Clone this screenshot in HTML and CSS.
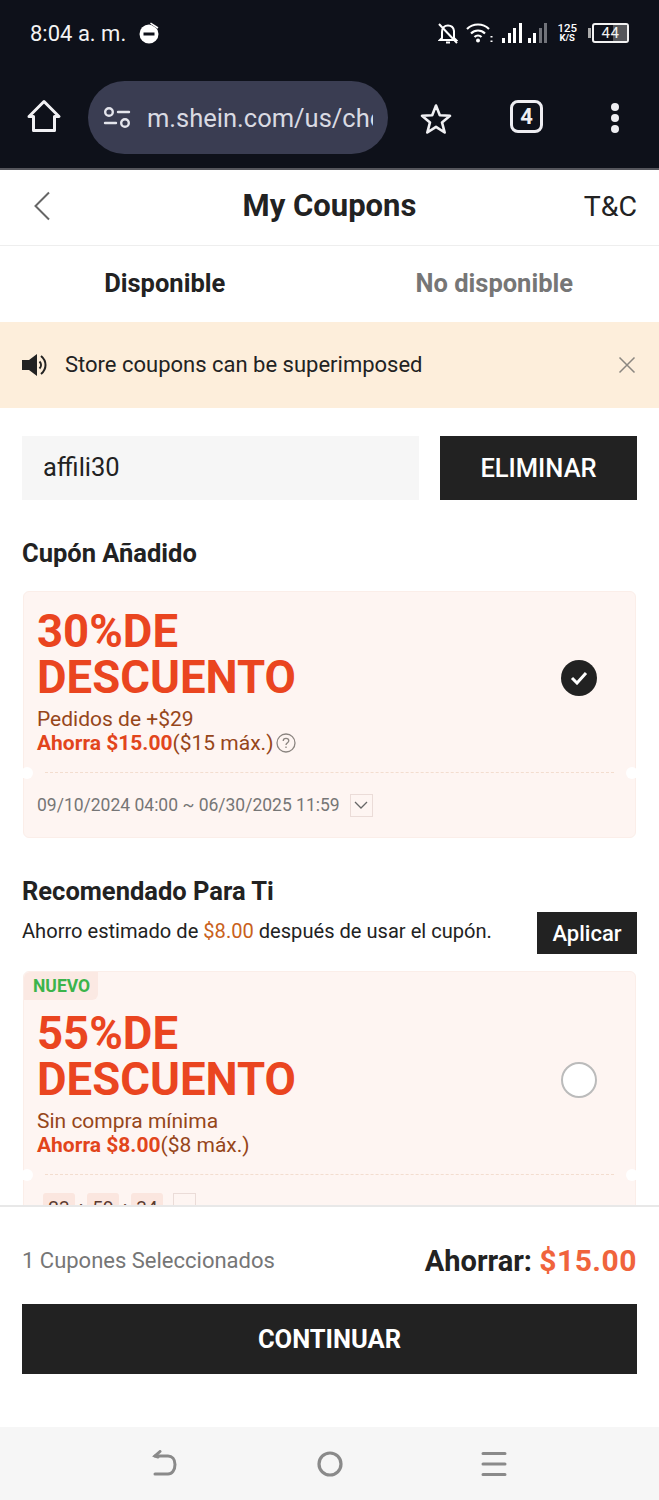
FILE: index.html
```html
<!DOCTYPE html>
<html lang="es">
  <head>
    <meta charset="UTF-8" />
    <meta name="viewport" content="width=device-width, initial-scale=1.0" />
    <title>My Coupons</title>
    <link rel="stylesheet" href="styles.css">
  </head>
  <body>
    <div class="phone">
      <div class="system-top">
        <div class="status-bar">
          <div class="status-left">
            <span class="clock">8:04 a. m.</span>
            <svg class="dnd" width="22" height="22" viewBox="0 0 22 22">
              <circle cx="11" cy="12" r="9.5" fill="#fff" />
              <path d="M11 1.5 20.5 7.5 22 0H11Z" fill="#0e111a" />
              <path d="M12.5 1.2 20 6" stroke="#fff" stroke-width="1.5" fill="none" />
              <rect x="5.5" y="10.5" width="11" height="3" fill="#0e111a" />
            </svg>
          </div>
          <div class="status-right">
            <svg width="20" height="24" viewBox="0 0 20 24" fill="none" stroke="#fff" stroke-width="2">
              <path d="M4 17V11C4 7 6.500 4.500 10 4.500 13 4.500 15.500 6.500 16 10V17L18 19H2Z" />
              <path d="M8 21.500H12" />
              <path d="M1 3 19 22" />
            </svg>
            <svg class="wifi" width="27" height="22" viewBox="0 0 27 22" fill="none" stroke="#fff" stroke-width="2.200">
              <path d="M1 7C7 1 17 1 23 7" />
              <path d="M5 11.500C9 7.500 15 7.500 19 11.500" />
              <path d="M8.500 15C10.500 13 13.500 13 15.500 15" />
              <circle cx="12" cy="18.500" r="2" fill="#fff" stroke="none" />
              <path d="M25.500 14V15.500M25.500 18.500V20" stroke-width="2" />
            </svg>
            <div class="signal">
              <i class="bar-1"></i><i class="bar-2"></i><i class="bar-3"></i><i class="bar-4"></i>
            </div>
            <div class="signal">
              <i class="bar-1"></i><i class="bar-2"></i><i class="bar-3 dim"></i><i class="bar-4 dim"></i>
            </div>
            <div class="speed"><span>125</span><span class="speed-unit">K/S</span></div>
            <div class="battery">
              <span class="battery-cap"></span>
              <div class="battery-body"><span class="battery-fill"></span><span class="battery-level">44</span></div>
            </div>
          </div>
        </div>

        <div class="browser-bar">
          <svg class="home-icon" width="36" height="36" viewBox="0 0 36 36" fill="none" stroke="#f1f1f4" stroke-width="3" stroke-linejoin="round">
            <path d="M3 18.500 18 3.500 33 18.500H28.500V32.500H7.500V18.500Z" />
          </svg>
          <div class="url-pill">
            <svg width="28" height="22" viewBox="0 0 28 22" fill="none" stroke="#e4e5ec" stroke-width="2.400" stroke-linecap="round">
              <circle cx="6" cy="5" r="3.800" />
              <path d="M15 5H26" />
              <path d="M2 16H13" />
              <circle cx="22" cy="16" r="3.800" />
            </svg>
            <span class="url-text">m.shein.com/us/checkout</span>
          </div>
          <svg class="star-icon" width="34" height="34" viewBox="0 0 34 34" fill="none" stroke="#f1f1f4" stroke-width="2.600" stroke-linejoin="round">
            <path d="M17 3.500 20.800 13.200 31 13.800 23 20.400 25.700 30.500 17 24.800 8.300 30.500 11 20.400 3 13.800 13.200 13.200Z" />
          </svg>
          <div class="tab-count">4</div>
          <div class="kebab"><i></i><i></i><i></i></div>
        </div>
      </div>

      <div class="page">
        <header class="page-header">
          <svg class="back-icon" width="20" height="30" viewBox="0 0 20 30" fill="none" stroke="#666" stroke-width="2">
            <path d="M17 1.500 3.500 15 17 28.500" />
          </svg>
          <h1>My Coupons</h1>
          <span class="tc-link">T&amp;C</span>
        </header>

        <nav class="tabs">
          <div class="tab active">Disponible</div>
          <div class="tab">No disponible</div>
        </nav>

        <div class="notice">
          <svg width="26" height="24" viewBox="0 0 26 24">
            <path d="M0 7H7L15 1V23L7 17H0Z" fill="#222" />
            <path d="M17.500 8.500C19.500 10.500 19.500 13.500 17.500 15.500" fill="none" stroke="#222" stroke-width="2" />
            <path d="M19 3C25 8 25 16 19 21" fill="none" stroke="#222" stroke-width="2" />
          </svg>
          <span class="notice-text">Store coupons can be superimposed</span>
          <svg class="notice-close" width="18" height="18" viewBox="0 0 18 18" fill="none" stroke="#8b8780" stroke-width="1.500">
            <path d="M1.500 1.500 16.500 16.500M16.500 1.500 1.500 16.500" />
          </svg>
        </div>

        <div class="content">
          <div class="code-row">
            <div class="code-input">affili30</div>
            <button class="remove-btn" type="button">ELIMINAR</button>
          </div>

          <h2 class="section-title added-title">Cupón Añadido</h2>

          <div class="coupon">
            <div class="coupon-main">
              <div class="coupon-info">
                <div class="coupon-amount">30%DE<br />DESCUENTO</div>
                <div class="coupon-rule">Pedidos de +$29</div>
                <div class="coupon-rule"><b>Ahorra $15.00</b>($15 máx.)<svg class="help-icon" width="20" height="20" viewBox="0 0 20 20" fill="none" stroke="#8b8580" stroke-width="1.300">
                    <circle cx="10" cy="10" r="9" />
                    <path d="M7.200 8C7.200 6.300 8.500 5.300 10 5.300 11.700 5.300 12.800 6.400 12.800 7.800 12.800 9.700 10 9.800 10 12" />
                    <path d="M10 13.600V15" />
                  </svg></div>
              </div>
              <span class="radio checked">
                <svg width="18" height="14" viewBox="0 0 18 14" fill="none" stroke="#fff" stroke-width="3">
                  <path d="M2 7 7 12 16 2" />
                </svg>
              </span>
            </div>
            <div class="coupon-divider"></div>
            <div class="coupon-foot">
              <span class="coupon-date">09/10/2024 04:00 ~ 06/30/2025 11:59</span>
              <span class="expand-box">
                <svg width="14" height="8" viewBox="0 0 14 8" fill="none" stroke="#666" stroke-width="1.300">
                  <path d="M1 1 7 7 13 1" />
                </svg>
              </span>
            </div>
          </div>

          <h2 class="section-title rec-title">Recomendado Para Ti</h2>
          <div class="saving-row">
            <span class="saving-text">Ahorro estimado de <em>$8.00</em> después de usar el cupón.</span>
            <button class="apply-btn" type="button">Aplicar</button>
          </div>

          <div class="coupon coupon-new">
            <span class="new-badge">NUEVO</span>
            <div class="coupon-main">
              <div class="coupon-info">
                <div class="coupon-amount">55%DE<br />DESCUENTO</div>
                <div class="coupon-rule">Sin compra mínima</div>
                <div class="coupon-rule"><b>Ahorra $8.00</b>($8 máx.)</div>
              </div>
              <span class="radio"></span>
            </div>
            <div class="coupon-divider"></div>
            <div class="coupon-foot countdown">
              <span class="time-box">23</span><span class="time-sep">:</span>
              <span class="time-box">59</span><span class="time-sep">:</span>
              <span class="time-box">34</span>
              <span class="expand-box"></span>
            </div>
          </div>
        </div>
      </div>

      <footer class="checkout">
        <div class="checkout-summary">
          <span class="selected-count">1 Cupones Seleccionados</span>
          <span class="saving-total">Ahorrar: <em>$15.00</em></span>
        </div>
        <button class="continue-btn" type="button">CONTINUAR</button>
      </footer>

      <div class="system-nav">
        <svg width="28" height="28" viewBox="0 0 28 28" fill="none" stroke="#8a8a8a" stroke-width="3" stroke-linecap="round">
          <path d="M4 6H17C21 6 24 9 24 14.500 24 20 21 24 17 24H4" />
          <path d="M9 1.500 4 6 7 7" />
        </svg>
        <svg width="28" height="28" viewBox="0 0 28 28" fill="none" stroke="#8a8a8a" stroke-width="3.200">
          <circle cx="14" cy="14" r="11" />
        </svg>
        <svg width="28" height="28" viewBox="0 0 28 28" fill="none" stroke="#8a8a8a" stroke-width="3" stroke-linecap="round">
          <path d="M3 3.500H25M3 14H25M3 24.500H25" />
        </svg>
      </div>
    </div>
  </body>
</html>
```

FILE: styles.css
```css
* {
  box-sizing: border-box;
}
body {
  margin: 0;
  font-family: Roboto, "Liberation Sans", sans-serif;
  color: #222;
  background: #fff;
}
h1,
h2 {
  margin: 0;
}
em {
  font-style: normal;
}
button {
  border: none;
  font-family: inherit;
  color: #fff;
  background-color: #222;
  padding: 0;
}
.phone {
  width: 659px;
  height: 1500px;
  display: flex;
  flex-direction: column;
  overflow: hidden;
}

/* phone status bar + browser bar */
.system-top {
  height: 170px;
  flex: none;
  background-color: #0e111a;
  border-bottom: 2px solid #55565c;
  color: #fff;
}
.status-bar {
  height: 66px;
  padding: 0 30px;
  display: flex;
  justify-content: space-between;
  align-items: center;
}
.status-left,
.status-right {
  display: flex;
  align-items: center;
}
.clock {
  font-size: 22px;
  color: #f4f4f4;
}
.dnd {
  margin-left: 12px;
}
.status-right {
  gap: 6px;
}
.wifi {
  margin-left: 2px;
  margin-right: 3px;
}
.signal {
  display: flex;
  align-items: flex-end;
  gap: 2.500px;
  height: 20px;
}
.signal i {
  width: 3px;
  background-color: #fff;
}
.signal .bar-1 {
  height: 5px;
}
.signal .bar-2 {
  height: 10px;
}
.signal .bar-3 {
  height: 15px;
}
.signal .bar-4 {
  height: 20px;
}
.signal .dim {
  background-color: #71737a;
}
.speed {
  display: flex;
  flex-direction: column;
  align-items: center;
  font-size: 11.500px;
  font-weight: 500;
  line-height: 10px;
  margin-left: 4px;
}
.speed-unit {
  font-size: 9.500px;
  font-weight: 700;
}
.battery {
  display: flex;
  align-items: center;
  margin-left: 5px;
}
.battery-cap {
  width: 3px;
  height: 10px;
  background-color: #aaa;
  margin-right: 1px;
}
.battery-body {
  position: relative;
  width: 37px;
  height: 20px;
  border: 2px solid #f2f2f2;
  border-radius: 3px;
  display: flex;
  align-items: center;
  justify-content: center;
}
.battery-fill {
  position: absolute;
  right: 0;
  top: 0;
  bottom: 0;
  width: 14px;
  background-color: #55565a;
}
.battery-level {
  position: relative;
  font-size: 15px;
  color: #f2f2f2;
  letter-spacing: 0.500px;
}
.browser-bar {
  height: 102px;
  display: flex;
  align-items: flex-start;
  padding: 15px 0 0 26px;
}
.home-icon {
  margin-top: 17px;
}
.url-pill {
  width: 300px;
  height: 73px;
  margin-left: 26px;
  padding: 0 15px 0 15px;
  border-radius: 37px;
  background-color: #3a3d52;
  display: flex;
  align-items: center;
  gap: 16px;
  overflow: hidden;
  flex: none;
}
.url-pill svg {
  flex: none;
}
.url-text {
  font-size: 25.500px;
  color: #d9dae2;
  white-space: nowrap;
  overflow: hidden;
}
.star-icon {
  margin: 21px 0 0 31px;
}
.tab-count {
  width: 33px;
  height: 33px;
  margin: 19px 0 0 57px;
  border: 3px solid #eeeef2;
  border-radius: 8px;
  font-size: 22px;
  font-weight: 700;
  color: #eeeef2;
  display: flex;
  align-items: center;
  justify-content: center;
}
.kebab {
  margin: 22px 0 0 68px;
  display: flex;
  flex-direction: column;
  gap: 3px;
}
.kebab i {
  width: 8px;
  height: 8px;
  border-radius: 50%;
  background-color: #eeeef2;
}

/* page */
.page {
  flex: 1;
  min-height: 0;
  overflow: hidden;
}
.page-header {
  position: relative;
  height: 76px;
  padding-bottom: 4px;
  border-bottom: 1px solid #eee;
  display: flex;
  align-items: center;
  justify-content: center;
}
.page-header h1 {
  font-size: 31px;
  font-weight: 700;
}
.back-icon {
  position: absolute;
  left: 32px;
  top: 21px;
}
.tc-link {
  position: absolute;
  right: 22px;
  top: 20px;
  font-size: 28.500px;
}
.tabs {
  height: 76px;
  padding-bottom: 2px;
  display: flex;
}
.tab {
  flex: 1;
  display: flex;
  align-items: center;
  justify-content: center;
  font-size: 25.500px;
  font-weight: 700;
  color: #767676;
}
.tab.active {
  color: #222;
}
.notice {
  height: 86px;
  background-color: #fdeedb;
  padding: 0 23px 0 22px;
  display: flex;
  align-items: center;
  gap: 17px;
}
.notice-text {
  font-size: 22px;
  padding-bottom: 2px;
  flex: 1;
}
.content {
  padding: 28px 22px 0;
}
.code-row {
  display: flex;
  justify-content: space-between;
}
.code-input {
  width: 397px;
  height: 64px;
  padding-left: 21px;
  padding-bottom: 2px;
  background-color: #f6f6f6;
  font-size: 25.500px;
  display: flex;
  align-items: center;
}
.remove-btn {
  width: 197px;
  height: 64px;
  font-size: 25.500px;
  font-weight: 500;
}
.section-title {
  font-size: 25.500px;
  font-weight: 700;
  line-height: 30px;
}
.added-title {
  margin-top: 38px;
}
.coupon {
  position: relative;
  margin: 23px 0 0 1px;
  width: 613px;
  background-color: #fef5f2;
  border: 1px solid #fbeee9;
  border-radius: 6px;
}
.coupon-main {
  height: 180px;
  padding: 17px 38px 0 13px;
  display: flex;
  justify-content: space-between;
  align-items: center;
}
.coupon-info {
  align-self: flex-start;
}
.coupon-amount {
  font-size: 45.500px;
  line-height: 46px;
  font-weight: 700;
  color: #ea4520;
}
.coupon-amount + .coupon-rule {
  margin-top: 6px;
}
.coupon-rule {
  font-size: 21px;
  line-height: 24px;
  color: #96461a;
  display: flex;
  align-items: center;
}
.coupon-rule b {
  color: #e2451c;
  font-weight: 700;
}
.help-icon {
  margin-left: 3px;
}
.radio {
  width: 36px;
  height: 36px;
  border-radius: 50%;
  border: 2px solid #bbb;
  background-color: #fff;
  display: flex;
  align-items: center;
  justify-content: center;
  flex: none;
  margin-top: -25px;
}
.radio.checked {
  border: none;
  background-color: #222;
}
.coupon-divider {
  position: relative;
  margin: 0 21px;
  border-top: 1px dashed #f3ddcf;
}
.coupon-divider::before,
.coupon-divider::after {
  content: "";
  position: absolute;
  top: -6px;
  width: 12px;
  height: 12px;
  border-radius: 50%;
  background-color: #fff;
}
.coupon-divider::before {
  left: -24px;
}
.coupon-divider::after {
  right: -24px;
}
.coupon-foot {
  height: 64px;
  padding: 0 13px;
  display: flex;
  align-items: center;
}
.coupon-date {
  font-size: 17.500px;
  color: #767676;
}
.expand-box {
  width: 23px;
  height: 23px;
  margin-left: 10px;
  border: 1px solid #ebdcd8;
  background-color: #fef5f2;
  display: flex;
  align-items: center;
  justify-content: center;
}
.rec-title {
  margin-top: 38px;
}
.saving-row {
  display: flex;
  justify-content: space-between;
  align-items: center;
  margin-top: 6px;
}
.saving-text {
  font-size: 20.100px;
  padding-bottom: 4px;
}
.saving-text em {
  color: #c9611b;
}
.apply-btn {
  width: 100px;
  height: 42px;
  font-size: 22px;
  font-weight: 500;
}
.coupon-new {
  margin-top: 17px;
}
.coupon-new .coupon-main {
  height: 202px;
  padding-top: 39px;
}
.new-badge {
  position: absolute;
  left: 0;
  top: 0;
  height: 28px;
  padding: 0 8px 0 9px;
  background-color: #fbe9e3;
  border-radius: 6px 0 6px 0;
  color: #3cb44b;
  font-size: 17.500px;
  font-weight: 700;
  line-height: 28px;
}
.countdown {
  padding-left: 19px;
  align-items: flex-start;
  padding-top: 18px;
}
.time-box {
  width: 32px;
  height: 30px;
  background-color: #fbe6df;
  border-radius: 3px;
  font-size: 19px;
  color: #5a3a2f;
  text-align: center;
  line-height: 30px;
}
.time-sep {
  width: 12px;
  text-align: center;
  font-size: 19px;
  color: #5a3a2f;
  line-height: 30px;
}

/* bottom */
.checkout {
  height: 222px;
  flex: none;
  padding: 0 22px;
  border-top: 2px solid #e8e8e8;
  background-color: #fff;
}
.checkout-summary {
  height: 97px;
  display: flex;
  justify-content: space-between;
  align-items: center;
  padding-top: 9px;
}
.selected-count {
  font-size: 22px;
  color: #767676;
}
.saving-total {
  font-size: 29px;
  font-weight: 700;
}
.saving-total em {
  font-size: 30px;
  letter-spacing: 0.500px;
  color: #f0643c;
}
.continue-btn {
  width: 100%;
  height: 70px;
  font-size: 25.500px;
  font-weight: 700;
}
.system-nav {
  height: 73px;
  flex: none;
  background-color: #f6f6f6;
  padding: 0 151px;
  display: flex;
  justify-content: space-between;
  align-items: center;
}
```
